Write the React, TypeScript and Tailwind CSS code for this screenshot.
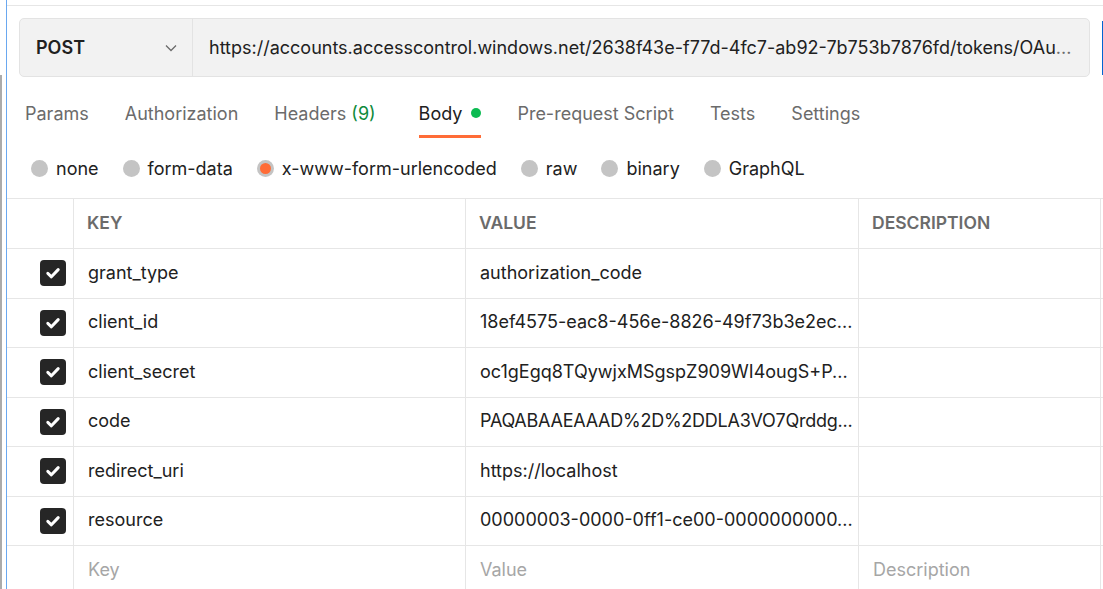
import React from "react";

const rows = [
  { k: "grant_type", v: "authorization_code" },
  { k: "client_id", v: "18ef4575-eac8-456e-8826-49f73b3e2ec..." },
  { k: "client_secret", v: "oc1gEgq8TQywjxMSgspZ909WI4ougS+P..." },
  { k: "code", v: "PAQABAAEAAAD%2D%2DDLA3VO7Qrddg...", tight: true },
  { k: "redirect_uri", v: "https://localhost" },
  { k: "resource", v: "00000003-0000-0ff1-ce00-0000000000..." },
];

const tabs = [
  { t: "Params" },
  { t: "Authorization" },
  { t: "Headers", extra: "(9)" },
  { t: "Body", active: true },
  { t: "Pre-request Script" },
  { t: "Tests" },
  { t: "Settings" },
];

const radios = ["none", "form-data", "x-www-form-urlencoded", "raw", "binary", "GraphQL"];

function Check() {
  return (
    <div className="w-[26px] h-[26px] rounded-[4px] bg-[#262626] flex items-center justify-center">
      <svg width="18" height="18" viewBox="0 0 18 18">
        <path d="M3.8 9.4 L7.4 12.8 L14.2 5.6" fill="none" stroke="white" strokeWidth="3" strokeLinecap="round" strokeLinejoin="round" />
      </svg>
    </div>
  );
}

export default function App() {
  return (
    <div
      className="w-[1103px] h-[589px] overflow-hidden bg-white relative flex"
      style={{ fontFamily: "Inter, 'Noto Sans', sans-serif" }}
    >
      <div className="w-[6px] shrink-0 flex flex-col">
        <div className="h-[75px]" />
        <div className="w-[2px] flex-1 bg-[#ababab]" />
      </div>
      <div className="w-px shrink-0 bg-[#6aa8f0]" />
      <div className="flex-1 flex flex-col min-w-0">
        <div className="h-[6px] shrink-0 border-b border-[#e6e6e6]" />
        <div className="flex pt-[12px] pl-[12px] pr-[13px]">
          <div className="flex h-[59px] flex-1 rounded-[5px] border border-[#e3e3e3] bg-[#f2f2f2]">
            <div className="w-[173px] shrink-0 flex items-center justify-between pl-[16px] pr-[14px] border-r border-[#e3e3e3]">
              <span className="text-[18px] font-semibold text-[#212121]">POST</span>
              <svg width="14" height="14" viewBox="0 0 14 14">
                <path d="M2 4.5 L7 9.5 L12 4.5" fill="none" stroke="#6b6b6b" strokeWidth="1.3" />
              </svg>
            </div>
            <div className="flex items-center pl-[16px] text-[18px] text-[#212121] whitespace-nowrap overflow-hidden">
              https://accounts.accesscontrol.windows.net/2638f43e-f77d-4fc7-ab92-7b753b7876fd/tokens/OAu<span className="text-[#6b6b6b]">...</span>
            </div>
          </div>
        </div>
        <div className="flex h-[56px] mt-[8px] pl-[18px] gap-[36px] items-stretch shrink-0">
          {tabs.map((t) => (
            <div key={t.t} className={"relative flex items-center " + (t.active ? "ml-[7px]" : "")}>
              <span className={"text-[18px] " + (t.active ? "text-[#212121]" : "text-[#6b6b6b]")}>
                {t.t}
                {t.extra && <span className="text-[#0f8a3c]"> {t.extra}</span>}
              </span>
              {t.active && <span className="ml-[9px] w-[10px] h-[10px] rounded-full bg-[#0cbb52]" />}
              {t.active && <div className="absolute left-0 right-0 top-[50px] h-[3px] bg-[#ff6c37]" />}
            </div>
          ))}
        </div>
        <div className="flex items-center h-[54px] mb-[3px] pl-[24px] gap-[24px] shrink-0">
          {radios.map((r, i) => (
            <div key={r} className="flex items-center gap-[8px]">
              {i === 2 ? (
                <span className="w-[17px] h-[17px] rounded-full bg-[#c4c4c4] flex items-center justify-center">
                  <span className="w-[11px] h-[11px] rounded-full bg-[#ff6c37]" />
                </span>
              ) : (
                <span className="w-[17px] h-[17px] rounded-full bg-[#c4c4c4]" />
              )}
              <span className="text-[18px] text-[#212121]">{r}</span>
            </div>
          ))}
        </div>
        <div className="border-t border-[#e6e6e6] flex flex-col">
          <div className="flex h-[50px] border-b border-[#e6e6e6] shrink-0">
            <div className="w-[67px] shrink-0 border-r border-[#e6e6e6]" />
            <div className="w-[392px] shrink-0 border-r border-[#e6e6e6] flex items-center pl-[13px] text-[17.5px] font-semibold text-[#6b6b6b]">KEY</div>
            <div className="w-[393px] shrink-0 border-r border-[#e6e6e6] flex items-center pl-[13px] text-[17.5px] font-semibold text-[#6b6b6b]">VALUE</div>
            <div className="w-[242px] shrink-0 border-r border-[#e6e6e6] flex items-center pl-[13px] text-[17.5px] font-semibold text-[#6b6b6b]">DESCRIPTION</div>
          </div>
          {rows.map((r) => (
            <div key={r.k} className="flex h-[49.5px] border-b border-[#e6e6e6] shrink-0">
              <div className="w-[67px] shrink-0 border-r border-[#e6e6e6] flex items-center justify-end pr-[7px]">
                <Check />
              </div>
              <div className="w-[392px] shrink-0 border-r border-[#e6e6e6] flex items-center pl-[14px] pb-[2px] text-[18px] text-[#212121]">{r.k}</div>
              <div className={"w-[393px] shrink-0 border-r border-[#e6e6e6] flex items-center pl-[14px] pb-[2px] text-[18px] text-[#212121] whitespace-nowrap overflow-hidden " + (r.tight ? "tracking-[-0.25px]" : "")}>{r.v}</div>
              <div className="w-[242px] shrink-0 border-r border-[#e6e6e6]" />
            </div>
          ))}
          <div className="flex h-[49.5px] border-b border-[#e6e6e6] shrink-0">
            <div className="w-[67px] shrink-0 border-r border-[#e6e6e6]" />
            <div className="w-[392px] shrink-0 border-r border-[#e6e6e6] flex items-center pl-[14px] pb-[2px] text-[18px] text-[#a6a6a6]">Key</div>
            <div className="w-[393px] shrink-0 border-r border-[#e6e6e6] flex items-center pl-[14px] pb-[2px] text-[18px] text-[#a6a6a6]">Value</div>
            <div className="w-[242px] shrink-0 border-r border-[#e6e6e6] flex items-center pl-[14px] pb-[2px] text-[18px] text-[#a6a6a6]">Description</div>
          </div>
        </div>
      </div>
      <div className="absolute right-0 top-[21px] w-px h-[54px] bg-[#0265d2]" />
    </div>
  );
}
